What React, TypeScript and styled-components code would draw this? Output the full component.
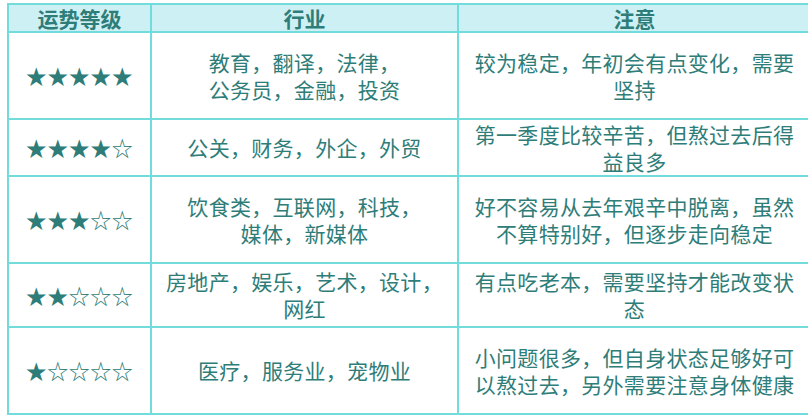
import React from 'react'
import styled, { createGlobalStyle } from 'styled-components'

const GlobalStyle = createGlobalStyle`
  html, body {
    margin: 0;
    padding: 0;
    background: #ffffff;
  }
`

const teal = '#2e7d79'
const line = '#72dbdb'

const Page = styled.div`
  padding: 3px 0 0 7px;
  font-family: 'Noto Sans CJK SC', 'Noto Sans', sans-serif;
  color: ${teal};
`

const Table = styled.table`
  width: 797px;
  border-collapse: collapse;
  table-layout: fixed;
  border: 2px solid ${line};
`

const HeadCell = styled.th<{ $w: number }>`
  width: ${(p) => p.$w}px;
  height: 26px;
  padding: 0;
  background: #cdf0f4;
  border: 2px solid ${line};
  font-size: 21px;
  font-weight: 700;
  line-height: 26px;
  text-align: center;
  vertical-align: middle;
`

const Row = styled.tr<{ $h: number }>`
  height: ${(p) => p.$h}px;
`

const Cell = styled.td`
  padding: 0 10px;
  border: 2px solid ${line};
  font-size: 21px;
  letter-spacing: 0.3px;
  line-height: 27px;
  text-align: center;
  vertical-align: middle;
  white-space: pre-line;
`

const Stars = styled.span`
  font-size: 21px;
  letter-spacing: 0.5px;
  color: ${teal};
`

interface Item {
  level: number
  jobs: string
  note: string
  height: number
}

const rows: Item[] = [
  { level: 5, jobs: '教育，翻译，法律，\n公务员，金融，投资', note: '较为稳定，年初会有点变化，需要\n坚持', height: 87 },
  { level: 4, jobs: '公关，财务，外企，外贸', note: '第一季度比较辛苦，但熬过去后得\n益良多', height: 57 },
  { level: 3, jobs: '饮食类，互联网，科技，\n媒体，新媒体', note: '好不容易从去年艰辛中脱离，虽然\n不算特别好，但逐步走向稳定', height: 87 },
  { level: 2, jobs: '房地产，娱乐，艺术，设计，\n网红', note: '有点吃老本，需要坚持才能改变状\n态', height: 64 },
  { level: 1, jobs: '医疗，服务业，宠物业', note: '小问题很多，但自身状态足够好可\n以熬过去，另外需要注意身体健康', height: 87 },
]

const starText = (n: number) => '★'.repeat(n) + '☆'.repeat(5 - n)

export default function App() {
  return (
    <Page>
      <GlobalStyle />
      <Table>
        <thead>
          <tr>
            <HeadCell $w={141}>运势等级</HeadCell>
            <HeadCell $w={305}>行业</HeadCell>
            <HeadCell $w={351}>注意</HeadCell>
          </tr>
        </thead>
        <tbody>
          {rows.map((r) => (
            <Row key={r.level} $h={r.height}>
              <Cell>
                <Stars>{starText(r.level)}</Stars>
              </Cell>
              <Cell>{r.jobs}</Cell>
              <Cell>{r.note}</Cell>
            </Row>
          ))}
        </tbody>
      </Table>
    </Page>
  )
}
